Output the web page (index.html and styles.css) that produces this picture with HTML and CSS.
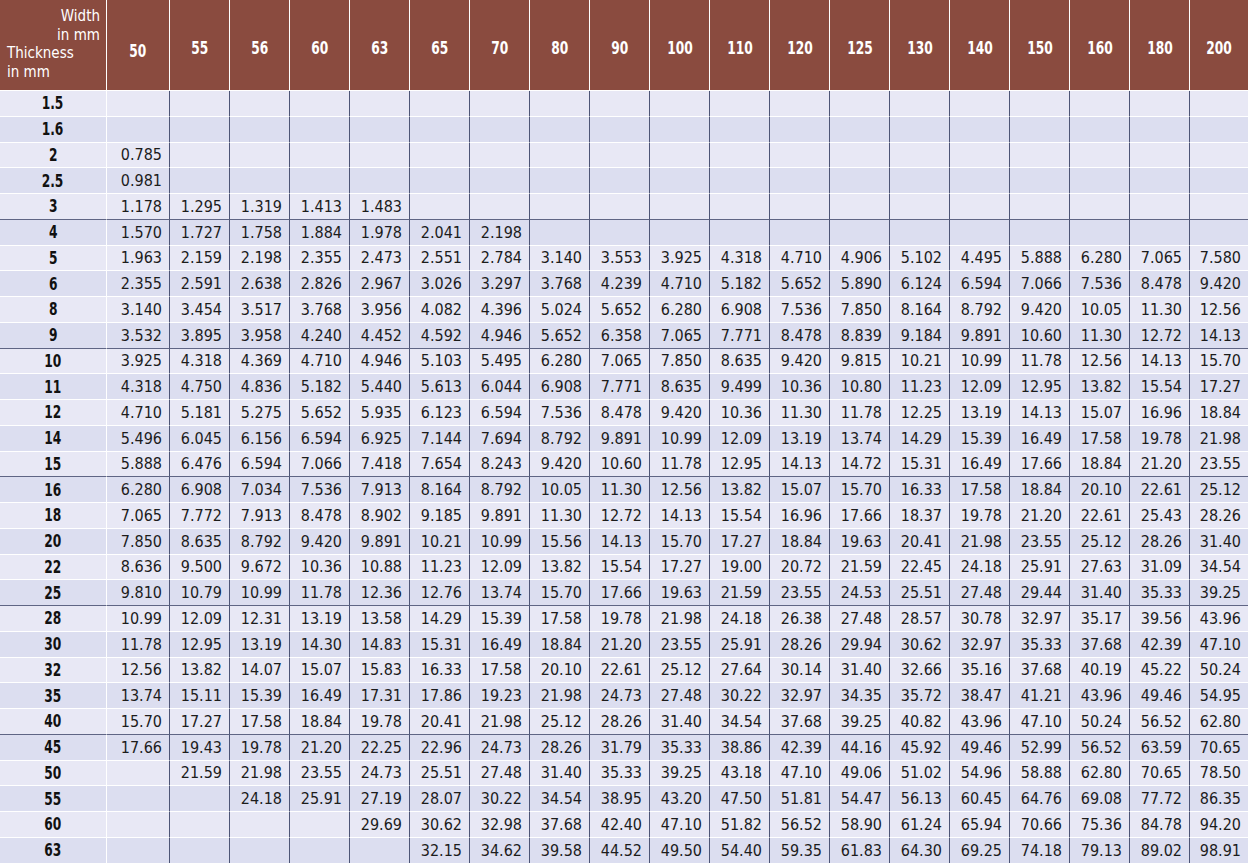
FILE: index.html
```html
<!DOCTYPE html>
<html lang="en">
<head>
<meta charset="utf-8">
<title>Flat bar weight table</title>
<link rel="stylesheet" href="styles.css">
</head>
<body>
<table class="weights">
<colgroup>
<col class="c-first"><col class="c-50"><col span="17" class="c-std"><col class="c-last">
</colgroup>
<thead>
<tr>
<th class="corner"><div class="w-label">Width<br>in mm</div><div class="t-label">Thickness<br>in mm</div></th>
<th class="lo"><span class="n">50</span></th><th><span class="n">55</span></th><th><span class="n">56</span></th><th><span class="n">60</span></th><th><span class="n">63</span></th><th><span class="n">65</span></th><th><span class="n">70</span></th><th><span class="n">80</span></th><th><span class="n">90</span></th><th><span class="n">100</span></th><th><span class="n">110</span></th><th><span class="n">120</span></th><th><span class="n">125</span></th><th><span class="n">130</span></th><th><span class="n">140</span></th><th><span class="n">150</span></th><th><span class="n">160</span></th><th><span class="n">180</span></th><th><span class="n">200</span></th>
</tr>
</thead>
<tbody>
<tr class="odd"><th><span class="n">1.5</span></th><td></td><td></td><td></td><td></td><td></td><td></td><td></td><td></td><td></td><td></td><td></td><td></td><td></td><td></td><td></td><td></td><td></td><td></td><td></td></tr>
<tr class="even"><th><span class="n">1.6</span></th><td></td><td></td><td></td><td></td><td></td><td></td><td></td><td></td><td></td><td></td><td></td><td></td><td></td><td></td><td></td><td></td><td></td><td></td><td></td></tr>
<tr class="odd"><th><span class="n">2</span></th><td>0.785</td><td></td><td></td><td></td><td></td><td></td><td></td><td></td><td></td><td></td><td></td><td></td><td></td><td></td><td></td><td></td><td></td><td></td><td></td></tr>
<tr class="even"><th><span class="n">2.5</span></th><td>0.981</td><td></td><td></td><td></td><td></td><td></td><td></td><td></td><td></td><td></td><td></td><td></td><td></td><td></td><td></td><td></td><td></td><td></td><td></td></tr>
<tr class="odd grp"><th><span class="n">3</span></th><td>1.178</td><td>1.295</td><td>1.319</td><td>1.413</td><td>1.483</td><td></td><td></td><td></td><td></td><td></td><td></td><td></td><td></td><td></td><td></td><td></td><td></td><td></td><td></td></tr>
<tr class="even"><th><span class="n">4</span></th><td>1.570</td><td>1.727</td><td>1.758</td><td>1.884</td><td>1.978</td><td>2.041</td><td>2.198</td><td></td><td></td><td></td><td></td><td></td><td></td><td></td><td></td><td></td><td></td><td></td><td></td></tr>
<tr class="odd"><th><span class="n">5</span></th><td>1.963</td><td>2.159</td><td>2.198</td><td>2.355</td><td>2.473</td><td>2.551</td><td>2.784</td><td>3.140</td><td>3.553</td><td>3.925</td><td>4.318</td><td>4.710</td><td>4.906</td><td>5.102</td><td>4.495</td><td>5.888</td><td>6.280</td><td>7.065</td><td>7.580</td></tr>
<tr class="even"><th><span class="n">6</span></th><td>2.355</td><td>2.591</td><td>2.638</td><td>2.826</td><td>2.967</td><td>3.026</td><td>3.297</td><td>3.768</td><td>4.239</td><td>4.710</td><td>5.182</td><td>5.652</td><td>5.890</td><td>6.124</td><td>6.594</td><td>7.066</td><td>7.536</td><td>8.478</td><td>9.420</td></tr>
<tr class="odd"><th><span class="n">8</span></th><td>3.140</td><td>3.454</td><td>3.517</td><td>3.768</td><td>3.956</td><td>4.082</td><td>4.396</td><td>5.024</td><td>5.652</td><td>6.280</td><td>6.908</td><td>7.536</td><td>7.850</td><td>8.164</td><td>8.792</td><td>9.420</td><td>10.05</td><td>11.30</td><td>12.56</td></tr>
<tr class="even grp"><th><span class="n">9</span></th><td>3.532</td><td>3.895</td><td>3.958</td><td>4.240</td><td>4.452</td><td>4.592</td><td>4.946</td><td>5.652</td><td>6.358</td><td>7.065</td><td>7.771</td><td>8.478</td><td>8.839</td><td>9.184</td><td>9.891</td><td>10.60</td><td>11.30</td><td>12.72</td><td>14.13</td></tr>
<tr class="odd"><th><span class="n">10</span></th><td>3.925</td><td>4.318</td><td>4.369</td><td>4.710</td><td>4.946</td><td>5.103</td><td>5.495</td><td>6.280</td><td>7.065</td><td>7.850</td><td>8.635</td><td>9.420</td><td>9.815</td><td>10.21</td><td>10.99</td><td>11.78</td><td>12.56</td><td>14.13</td><td>15.70</td></tr>
<tr class="even"><th><span class="n">11</span></th><td>4.318</td><td>4.750</td><td>4.836</td><td>5.182</td><td>5.440</td><td>5.613</td><td>6.044</td><td>6.908</td><td>7.771</td><td>8.635</td><td>9.499</td><td>10.36</td><td>10.80</td><td>11.23</td><td>12.09</td><td>12.95</td><td>13.82</td><td>15.54</td><td>17.27</td></tr>
<tr class="odd"><th><span class="n">12</span></th><td>4.710</td><td>5.181</td><td>5.275</td><td>5.652</td><td>5.935</td><td>6.123</td><td>6.594</td><td>7.536</td><td>8.478</td><td>9.420</td><td>10.36</td><td>11.30</td><td>11.78</td><td>12.25</td><td>13.19</td><td>14.13</td><td>15.07</td><td>16.96</td><td>18.84</td></tr>
<tr class="even"><th><span class="n">14</span></th><td>5.496</td><td>6.045</td><td>6.156</td><td>6.594</td><td>6.925</td><td>7.144</td><td>7.694</td><td>8.792</td><td>9.891</td><td>10.99</td><td>12.09</td><td>13.19</td><td>13.74</td><td>14.29</td><td>15.39</td><td>16.49</td><td>17.58</td><td>19.78</td><td>21.98</td></tr>
<tr class="odd grp"><th><span class="n">15</span></th><td>5.888</td><td>6.476</td><td>6.594</td><td>7.066</td><td>7.418</td><td>7.654</td><td>8.243</td><td>9.420</td><td>10.60</td><td>11.78</td><td>12.95</td><td>14.13</td><td>14.72</td><td>15.31</td><td>16.49</td><td>17.66</td><td>18.84</td><td>21.20</td><td>23.55</td></tr>
<tr class="even"><th><span class="n">16</span></th><td>6.280</td><td>6.908</td><td>7.034</td><td>7.536</td><td>7.913</td><td>8.164</td><td>8.792</td><td>10.05</td><td>11.30</td><td>12.56</td><td>13.82</td><td>15.07</td><td>15.70</td><td>16.33</td><td>17.58</td><td>18.84</td><td>20.10</td><td>22.61</td><td>25.12</td></tr>
<tr class="odd"><th><span class="n">18</span></th><td>7.065</td><td>7.772</td><td>7.913</td><td>8.478</td><td>8.902</td><td>9.185</td><td>9.891</td><td>11.30</td><td>12.72</td><td>14.13</td><td>15.54</td><td>16.96</td><td>17.66</td><td>18.37</td><td>19.78</td><td>21.20</td><td>22.61</td><td>25.43</td><td>28.26</td></tr>
<tr class="even"><th><span class="n">20</span></th><td>7.850</td><td>8.635</td><td>8.792</td><td>9.420</td><td>9.891</td><td>10.21</td><td>10.99</td><td>15.56</td><td>14.13</td><td>15.70</td><td>17.27</td><td>18.84</td><td>19.63</td><td>20.41</td><td>21.98</td><td>23.55</td><td>25.12</td><td>28.26</td><td>31.40</td></tr>
<tr class="odd"><th><span class="n">22</span></th><td>8.636</td><td>9.500</td><td>9.672</td><td>10.36</td><td>10.88</td><td>11.23</td><td>12.09</td><td>13.82</td><td>15.54</td><td>17.27</td><td>19.00</td><td>20.72</td><td>21.59</td><td>22.45</td><td>24.18</td><td>25.91</td><td>27.63</td><td>31.09</td><td>34.54</td></tr>
<tr class="even grp"><th><span class="n">25</span></th><td>9.810</td><td>10.79</td><td>10.99</td><td>11.78</td><td>12.36</td><td>12.76</td><td>13.74</td><td>15.70</td><td>17.66</td><td>19.63</td><td>21.59</td><td>23.55</td><td>24.53</td><td>25.51</td><td>27.48</td><td>29.44</td><td>31.40</td><td>35.33</td><td>39.25</td></tr>
<tr class="odd"><th><span class="n">28</span></th><td>10.99</td><td>12.09</td><td>12.31</td><td>13.19</td><td>13.58</td><td>14.29</td><td>15.39</td><td>17.58</td><td>19.78</td><td>21.98</td><td>24.18</td><td>26.38</td><td>27.48</td><td>28.57</td><td>30.78</td><td>32.97</td><td>35.17</td><td>39.56</td><td>43.96</td></tr>
<tr class="even"><th><span class="n">30</span></th><td>11.78</td><td>12.95</td><td>13.19</td><td>14.30</td><td>14.83</td><td>15.31</td><td>16.49</td><td>18.84</td><td>21.20</td><td>23.55</td><td>25.91</td><td>28.26</td><td>29.94</td><td>30.62</td><td>32.97</td><td>35.33</td><td>37.68</td><td>42.39</td><td>47.10</td></tr>
<tr class="odd"><th><span class="n">32</span></th><td>12.56</td><td>13.82</td><td>14.07</td><td>15.07</td><td>15.83</td><td>16.33</td><td>17.58</td><td>20.10</td><td>22.61</td><td>25.12</td><td>27.64</td><td>30.14</td><td>31.40</td><td>32.66</td><td>35.16</td><td>37.68</td><td>40.19</td><td>45.22</td><td>50.24</td></tr>
<tr class="even"><th><span class="n">35</span></th><td>13.74</td><td>15.11</td><td>15.39</td><td>16.49</td><td>17.31</td><td>17.86</td><td>19.23</td><td>21.98</td><td>24.73</td><td>27.48</td><td>30.22</td><td>32.97</td><td>34.35</td><td>35.72</td><td>38.47</td><td>41.21</td><td>43.96</td><td>49.46</td><td>54.95</td></tr>
<tr class="odd grp"><th><span class="n">40</span></th><td>15.70</td><td>17.27</td><td>17.58</td><td>18.84</td><td>19.78</td><td>20.41</td><td>21.98</td><td>25.12</td><td>28.26</td><td>31.40</td><td>34.54</td><td>37.68</td><td>39.25</td><td>40.82</td><td>43.96</td><td>47.10</td><td>50.24</td><td>56.52</td><td>62.80</td></tr>
<tr class="even"><th><span class="n">45</span></th><td>17.66</td><td>19.43</td><td>19.78</td><td>21.20</td><td>22.25</td><td>22.96</td><td>24.73</td><td>28.26</td><td>31.79</td><td>35.33</td><td>38.86</td><td>42.39</td><td>44.16</td><td>45.92</td><td>49.46</td><td>52.99</td><td>56.52</td><td>63.59</td><td>70.65</td></tr>
<tr class="odd"><th><span class="n">50</span></th><td></td><td>21.59</td><td>21.98</td><td>23.55</td><td>24.73</td><td>25.51</td><td>27.48</td><td>31.40</td><td>35.33</td><td>39.25</td><td>43.18</td><td>47.10</td><td>49.06</td><td>51.02</td><td>54.96</td><td>58.88</td><td>62.80</td><td>70.65</td><td>78.50</td></tr>
<tr class="even"><th><span class="n">55</span></th><td></td><td></td><td>24.18</td><td>25.91</td><td>27.19</td><td>28.07</td><td>30.22</td><td>34.54</td><td>38.95</td><td>43.20</td><td>47.50</td><td>51.81</td><td>54.47</td><td>56.13</td><td>60.45</td><td>64.76</td><td>69.08</td><td>77.72</td><td>86.35</td></tr>
<tr class="odd"><th><span class="n">60</span></th><td></td><td></td><td></td><td></td><td>29.69</td><td>30.62</td><td>32.98</td><td>37.68</td><td>42.40</td><td>47.10</td><td>51.82</td><td>56.52</td><td>58.90</td><td>61.24</td><td>65.94</td><td>70.66</td><td>75.36</td><td>84.78</td><td>94.20</td></tr>
<tr class="even"><th><span class="n">63</span></th><td></td><td></td><td></td><td></td><td></td><td>32.15</td><td>34.62</td><td>39.58</td><td>44.52</td><td>49.50</td><td>54.40</td><td>59.35</td><td>61.83</td><td>64.30</td><td>69.25</td><td>74.18</td><td>79.13</td><td>89.02</td><td>98.91</td></tr>
</tbody>
</table>
</body>
</html>
```

FILE: styles.css
```css
html, body {
  margin: 0;
  padding: 0;
  background: #ffffff;
}

.weights {
  width: 1248px;
  table-layout: fixed;
  border-collapse: separate;
  border-spacing: 0;
  font-family: "DejaVu Sans Condensed", "DejaVu Sans", sans-serif;
  font-stretch: condensed;
}

.c-first { width: 107px; }
.c-50 { width: 63px; }
.c-std { width: 60px; }
.c-last { width: 58px; }

/* narrow bold numerals of header and first column */
.n {
  display: inline-block;
  font-family: "DejaVu Sans Condensed", "DejaVu Sans", sans-serif;
  font-weight: bold;
  font-size: 17px;
  transform: scaleX(0.8);
}

.weights thead th {
  height: 91px;
  padding: 5px 0 0 0;
  background: #8a4b3f;
  color: #ffffff;
  text-align: center;
  vertical-align: middle;
  border-right: 1px solid #ffffff;
  border-bottom: 1px solid #ffffff;
  box-sizing: border-box;
}

.weights thead th:last-child {
  border-right: none;
}

.weights thead th.lo {
  padding-top: 11px;
}

.weights thead th.corner {
  font-family: "DejaVu Sans Condensed", "DejaVu Sans", sans-serif;
  font-weight: normal;
  font-size: 15px;
  line-height: 18.5px;
  text-align: left;
  vertical-align: top;
  padding: 7px 6px 0 7px;
}

.w-label {
  text-align: right;
}

.t-label {
  text-align: left;
}

.weights tbody tr {
  height: 25.75px;
}

.weights tbody tr.odd { background: #e8e8f5; }
.weights tbody tr.even { background: #dcdef0; }

.weights tbody th,
.weights tbody td {
  padding: 0;
  border-bottom: 1px solid #ffffff;
  box-sizing: border-box;
  height: 25.75px;
  vertical-align: middle;
  white-space: nowrap;
}

.weights tbody th {
  color: #111111;
  text-align: center;
  border-right: 1px solid #ffffff;
}

.weights tbody td {
  font-size: 16px;
  color: #1c1c1c;
  text-align: right;
  padding-right: 7px;
  border-right: 1px solid #4d5576;
}

.weights tbody td:last-child {
  border-right: none;
}

.weights tbody tr.grp th,
.weights tbody tr.grp td {
  border-bottom: 1px solid #5f6584;
}
```
